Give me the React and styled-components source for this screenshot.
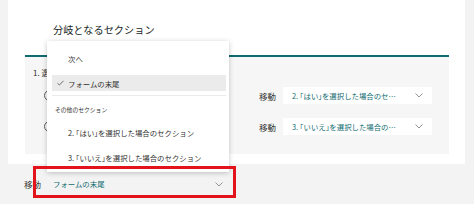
import React from "react";
import styled, { createGlobalStyle } from "styled-components";

const GlobalStyle = createGlobalStyle`
  html, body {
    margin: 0;
    padding: 0;
    background: #f3f3f3;
  }
  body {
    font-family: "Noto Sans CJK JP", "Noto Sans", sans-serif;
    color: #323130;
  }
`;

const Chevron = () => (
  <svg width="8" height="5" viewBox="0 0 8 5">
    <polyline
      points="0.5,0.5 4,4 7.5,0.5"
      fill="none"
      stroke="#8a8886"
      strokeWidth="0.9"
    />
  </svg>
);

const Check = () => (
  <svg width="7" height="6" viewBox="0 0 7 6">
    <polyline
      points="0.5,3.2 2.4,5 6.5,0.8"
      fill="none"
      stroke="#605e5c"
      strokeWidth="0.9"
    />
  </svg>
);

const App = () => {
  const branches = [
    "2. 「はい」を選択した場合のセクション",
    "3. 「いいえ」を選択した場合のセクション",
  ];

  return (
    <>
      <GlobalStyle />
      <Page>
        <Card>
          <Title>分岐となるセクション</Title>
          <Panel>
            <Question>1. 選択してください</Question>
            <Options>
              {branches.map((b) => (
                <OptionRow key={b}>
                  <Radio />
                  <Spacer />
                  <MoveLabel>移動</MoveLabel>
                  <Select>
                    <SelectText>{b}</SelectText>
                    <Chevron />
                  </Select>
                </OptionRow>
              ))}
            </Options>
          </Panel>
        </Card>

        <BottomRow>
          <MoveLabel>移動</MoveLabel>
          <BottomSelect>
            <SelectText>フォームの末尾</SelectText>
            <Chevron />
          </BottomSelect>
        </BottomRow>

        <Menu>
          <MenuItem $top={0}>
            <CheckSlot />
            次へ
          </MenuItem>
          <MenuItem $top={9} $selected>
            <CheckSlot>
              <Check />
            </CheckSlot>
            フォームの末尾
          </MenuItem>
          <Separator />
          <GroupLabel>その他のセクション</GroupLabel>
          {branches.map((b, i) => (
            <MenuItem key={b} $top={i === 0 ? 7 : 9}>
              <CheckSlot />
              {b}
            </MenuItem>
          ))}
        </Menu>

        <Highlight />
      </Page>
    </>
  );
};

const Page = styled.div`
  position: relative;
  width: 474px;
  height: 204px;
  padding-left: 8px;
  box-sizing: border-box;
  overflow: hidden;
`;

const Card = styled.div`
  width: 457px;
  height: 164px;
  background: #fff;
  padding: 23px 16px 0 17px;
  box-sizing: border-box;
`;

const Title = styled.div`
  font-size: 10.2px;
  line-height: 14px;
  padding-left: 28px;
  color: #201f1e;
`;

const Panel = styled.div`
  margin-top: 18px;
  border-top: 2px solid #0f6b70;
  background: #f6f6f6;
  height: 99px;
  box-sizing: border-box;
  padding: 10px 17px 0 8px;
`;

const Question = styled.div`
  font-size: 8px;
  line-height: 12px;
  color: #323130;
`;

const Options = styled.div`
  margin-top: 8px;
  display: flex;
  flex-direction: column;
  gap: 14px;
`;

const OptionRow = styled.div`
  display: flex;
  align-items: center;
  height: 17px;
`;

const Radio = styled.span`
  width: 11px;
  height: 11px;
  margin-left: 11px;
  border: 1px solid #605e5c;
  border-radius: 50%;
  box-sizing: border-box;
`;

const Spacer = styled.div`
  flex: 1;
`;

const MoveLabel = styled.span`
  font-size: 8.5px;
  line-height: 12px;
  color: #323130;
  margin-right: 7px;
  white-space: nowrap;
`;

const Select = styled.div`
  display: flex;
  align-items: center;
  gap: 12px;
  width: 149px;
  height: 17px;
  background: #fff;
  padding: 0 9px;
  box-sizing: border-box;
`;

const SelectText = styled.span`
  flex: 1;
  min-width: 0;
  font-size: 7.4px;
  line-height: 12px;
  color: #0f6b70;
  white-space: nowrap;
  overflow: hidden;
  text-overflow: ellipsis;
  font-feature-settings: "halt";
`;

const BottomRow = styled.div`
  display: flex;
  align-items: center;
  height: 40px;
  padding-left: 16px;
`;

const BottomSelect = styled(Select)`
  width: 186px;
  height: 24px;
  background: transparent;
  padding: 0 11px 0 5px;
`;

const Menu = styled.div`
  position: absolute;
  left: 47px;
  top: 41px;
  width: 182px;
  height: 131px;
  background: #fff;
  box-shadow: 0 1px 5px rgba(0, 0, 0, 0.22);
  padding: 9px 3px 0 5px;
  box-sizing: border-box;
  display: flex;
  flex-direction: column;
`;

const MenuItem = styled.div`
  display: flex;
  align-items: center;
  height: 16px;
  margin-top: ${(p) => p.$top}px;
  background: ${(p) => (p.$selected ? "#ebebeb" : "transparent")};
  font-size: 7.4px;
  color: #323130;
  white-space: nowrap;
  font-feature-settings: "halt";
`;

const CheckSlot = styled.span`
  display: flex;
  align-items: center;
  flex: 0 0 16px;
  padding-left: 5px;
  box-sizing: border-box;
`;

const Separator = styled.div`
  height: 1px;
  margin-top: 4px;
  background: #edebe9;
`;

const GroupLabel = styled.div`
  margin-top: 7px;
  height: 14px;
  line-height: 14px;
  font-size: 5.8px;
  color: #323130;
  padding-left: 3px;
`;

const Highlight = styled.div`
  position: absolute;
  left: 33px;
  top: 166px;
  width: 203px;
  height: 32px;
  border: 3px solid #e2131a;
  box-sizing: border-box;
`;

export default App;
